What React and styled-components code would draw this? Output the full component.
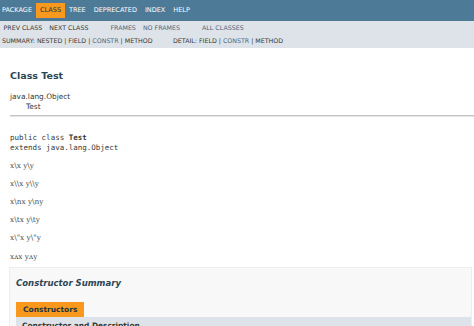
import React from "react";
import styled, { createGlobalStyle } from "styled-components";

const GlobalStyle = createGlobalStyle`
  html, body {
    margin: 0;
    padding: 0;
    background: #ffffff;
    overflow: hidden;
  }
  body {
    font-family: "DejaVu Sans", Arial, sans-serif;
    color: #353833;
  }
`;

const Page = styled.div`
  width: 474px;
  height: 326px;
  overflow: hidden;
`;

const TopNav = styled.ul`
  display: flex;
  margin: 0;
  padding: 3px 0 3px 0;
  height: 15px;
  background: #4d7a97;
  list-style: none;
`;

const TopItem = styled.li`
  padding: 0 4px;
  height: 15px;
  line-height: 15px;
  font-size: 6.5px;
  text-transform: uppercase;
  color: ${(p) => (p.$active ? "#253441" : "#ffffff")};
  background: ${(p) => (p.$active ? "#f8981d" : "transparent")};

  &:first-child {
    padding-left: 2px;
  }
`;

const SubNav = styled.div`
  background: #dee3e9;
  padding: 2px 0 2px 0;
  display: flex;
  flex-direction: column;
  gap: 3px;
`;

const SubRow = styled.div`
  display: flex;
  height: 10px;
  line-height: 10px;
  font-size: 6.3px;
  text-transform: uppercase;
`;

const NavGroup = styled.ul`
  display: flex;
  margin: 0 ${(p) => p.$after || 0}px 0 0;
  padding: 0 0 0 ${(p) => p.$lead || 0}px;
  list-style: none;
  width: ${(p) => (p.$width ? `${p.$width}px` : "auto")};
`;

const NavLi = styled.li`
  padding: 0 ${(p) => (p.$tight ? 0 : 3.5)}px;
  color: ${(p) => (p.$link ? "#4a6782" : "#353833")};
  white-space: pre;
`;

const Content = styled.div`
  padding: 0 0 0 10px;
`;

const Title = styled.h2`
  margin: 22px 0 0 0;
  font-size: 9.5px;
  line-height: 12px;
  font-weight: bold;
  color: #2c4557;
`;

const Inheritance = styled.div`
  font-size: 7.4px;
  line-height: 9.6px;
  color: #353833;
  padding-left: ${(p) => (p.$nested ? 16 : 0)}px;
  margin-top: ${(p) => (p.$nested ? 0 : 10)}px;
`;

const Rule = styled.hr`
  margin: 3.6px 0 0 0;
  border: 0;
  border-top: 1px solid #c4c4c4;
  border-bottom: 1px solid #e6e6e6;
  height: 0;
`;

const Signature = styled.pre`
  margin: 16px 0 0 0;
  font-family: "DejaVu Sans Mono", "Liberation Mono", monospace;
  font-size: 7.5px;
  line-height: 10px;
  color: #353833;
`;

const Block = styled.div`
  margin-top: 2.4px;
  font-family: "DejaVu Serif", Georgia, "Liberation Serif", serif;
  font-size: 7.4px;
  color: #474747;
`;

const Para = styled.p`
  margin: 7.8px 0 0 0;
  line-height: 10.4px;
`;

const Summary = styled.div`
  margin: 5.4px 2px 0 -1px;
  border: 1px solid #ededed;
  border-bottom: 0;
  background: #f8f8f8;
  padding: 9.5px 0 0 6px;
`;

const SummaryTitle = styled.h3`
  margin: 0;
  font-size: 8.5px;
  line-height: 11px;
  font-weight: bold;
  font-style: italic;
  color: #2c4557;
`;

const Caption = styled.div`
  margin-top: 13px;
  display: inline-block;
  background: #f8981d;
  color: #253441;
  font-weight: bold;
  font-size: 7.5px;
  height: 15px;
  line-height: 15px;
  padding: 0 7px;
`;

const HeaderRow = styled.div`
  background: #dee3e9;
  height: 16px;
  line-height: 10px;
  padding: 4px 0 0 6px;
  font-size: 7.4px;
  font-weight: bold;
  color: #353833;
`;

const topItems = ["Package", "Class", "Tree", "Deprecated", "Index", "Help"];

const lines = [
  "x\\x y\\y",
  "x\\\\x y\\\\y",
  "x\\nx y\\ny",
  "x\\tx y\\ty",
  'x\\"x y\\"y',
  "x\u028cx y\u028cy",
];

export default function App() {
  return (
    <Page>
      <GlobalStyle />
      <TopNav>
        {topItems.map((item) => (
          <TopItem key={item} $active={item === "Class"}>
            {item}
          </TopItem>
        ))}
      </TopNav>
      <SubNav>
        <SubRow>
          <NavGroup $after={15}>
            <NavLi>Prev Class</NavLi>
            <NavLi>Next Class</NavLi>
          </NavGroup>
          <NavGroup $after={15}>
            <NavLi $link>Frames</NavLi>
            <NavLi $link>No Frames</NavLi>
          </NavGroup>
          <NavGroup>
            <NavLi $link>All Classes</NavLi>
          </NavGroup>
        </SubRow>
        <SubRow>
          <NavGroup $width={169} $lead={2}>
            <NavLi $tight>Summary: Nested | Field | </NavLi>
            <NavLi $tight $link>Constr</NavLi>
            <NavLi $tight> | Method</NavLi>
          </NavGroup>
          <NavGroup $lead={2}>
            <NavLi $tight>Detail: Field | </NavLi>
            <NavLi $tight $link>Constr</NavLi>
            <NavLi $tight> | Method</NavLi>
          </NavGroup>
        </SubRow>
      </SubNav>
      <Content>
        <Title>Class Test</Title>
        <Inheritance>java.lang.Object</Inheritance>
        <Inheritance $nested>Test</Inheritance>
        <Rule />
        <Signature>
          public class <b>Test</b>
          {"\n"}extends java.lang.Object
        </Signature>
        <Block>
          {lines.map((line) => (
            <Para key={line}>{line}</Para>
          ))}
        </Block>
        <Summary>
          <SummaryTitle>Constructor Summary</SummaryTitle>
          <Caption>Constructors</Caption>
          <HeaderRow>Constructor and Description</HeaderRow>
        </Summary>
      </Content>
    </Page>
  );
}
